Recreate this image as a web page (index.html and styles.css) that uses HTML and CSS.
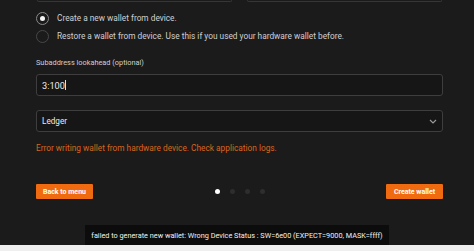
FILE: index.html
```html
<!doctype html>
<html lang="en">
<head>
  <meta charset="UTF-8">
  <title>Create wallet from device</title>
  <link rel="stylesheet" href="styles.css">
</head>
<body>
  <div class="app">
    <div class="top-fields">
      <div class="field-box"></div>
      <div class="field-box"></div>
    </div>

    <div class="options">
      <label class="option">
        <span class="radio checked"></span>
        <span>Create a new wallet from device.</span>
      </label>
      <label class="option">
        <span class="radio"></span>
        <span>Restore a wallet from device. Use this if you used your hardware wallet before.</span>
      </label>
    </div>

    <div class="field-label">Subaddress lookahead (optional)</div>
    <div class="text-input"><span class="value">3:100</span><span class="caret"></span></div>

    <div class="select-input">
      <span>Ledger</span>
      <svg class="chevron" width="8" height="5" viewBox="0 0 8 5">
        <path d="M1 1 L4 4 L7 1" fill="none" stroke="#9a9a9a" stroke-width="1.2"/>
      </svg>
    </div>

    <div class="error-msg">Error writing wallet from hardware device. Check application logs.</div>

    <div class="nav-row">
      <button class="btn">Back to menu</button>
      <div class="dots">
        <span class="dot active"></span>
        <span class="dot"></span>
        <span class="dot"></span>
        <span class="dot"></span>
      </div>
      <button class="btn">Create wallet</button>
    </div>

    <div class="toast">failed to generate new wallet: Wrong Device Status : SW=6e00 (EXPECT=9000, MASK=ffff)</div>
  </div>
  <div class="bottom-strip"></div>
</body>
</html>
```

FILE: styles.css
```css
body {
  margin: 0;
  background: #1b1b1b;
  font-family: Roboto, 'Liberation Sans', sans-serif;
  color: #d4d4d4;
  height: 251px;
  overflow: hidden;
}
.app {
  position: relative;
  box-sizing: border-box;
  height: 245px;
  padding: 0 31px 0 36px;
}
.bottom-strip {
  height: 6px;
  background: #efefef;
}
.top-fields {
  display: flex;
  gap: 15px;
  margin: 0 1px;
}
.field-box {
  flex: 1;
  height: 1px;
  border: 1px solid #363636;
  border-top: none;
  border-radius: 0 0 3px 3px;
}
.options {
  margin-top: 7px;
}
.option {
  display: flex;
  align-items: center;
  gap: 8px;
  height: 18px;
  font-size: 8.3px;
  color: #d0d0d0;
}
.radio {
  box-sizing: border-box;
  width: 13px;
  height: 13px;
  border: 1.5px solid #484848;
  border-radius: 50%;
  display: flex;
  align-items: center;
  justify-content: center;
}
.radio.checked {
  border-color: #8a8a8a;
}
.radio.checked::after {
  content: "";
  width: 5px;
  height: 5px;
  border-radius: 50%;
  background: #f4f4f4;
}
.field-label {
  margin-top: 13px;
  font-size: 7.35px;
  line-height: 10px;
  color: #cfcfcf;
}
.text-input,
.select-input {
  box-sizing: border-box;
  height: 22px;
  border: 1px solid #3e3e3e;
  border-radius: 3px;
  background: #161616;
  display: flex;
  align-items: center;
  padding: 0 5px;
  font-size: 9.2px;
  color: #ececec;
}
.text-input {
  margin-top: 6px;
}
.caret {
  width: 1px;
  height: 10px;
  background: #e0e0e0;
}
.select-input {
  margin-top: 14px;
  font-size: 8.2px;
  justify-content: space-between;
  padding-right: 5px;
}
.error-msg {
  margin-top: 10px;
  font-size: 8.3px;
  line-height: 12px;
  color: #d9651c;
}
.nav-row {
  margin-top: 30px;
  display: flex;
  justify-content: space-between;
  align-items: center;
}
.btn {
  background: #f06b0f;
  color: #fff;
  border: none;
  border-radius: 1px;
  height: 15px;
  width: 57px;
  padding: 0;
  font-family: Roboto, 'Liberation Sans', sans-serif;
  font-size: 7px;
  font-weight: bold;
  cursor: pointer;
}
.dots {
  display: flex;
  gap: 10px;
  padding-left: 1px;
}
.dot {
  width: 5px;
  height: 5px;
  border-radius: 50%;
  background: #2e2e2e;
}
.dot.active {
  background: #ffffff;
}
.toast {
  position: absolute;
  left: 0;
  right: 0;
  bottom: 0;
  margin: 0 auto;
  width: 304px;
  height: 20px;
  background: #0c0c0c;
  color: #f2f2f2;
  font-size: 7.3px;
  display: flex;
  align-items: center;
  justify-content: center;
  white-space: nowrap;
}
```
